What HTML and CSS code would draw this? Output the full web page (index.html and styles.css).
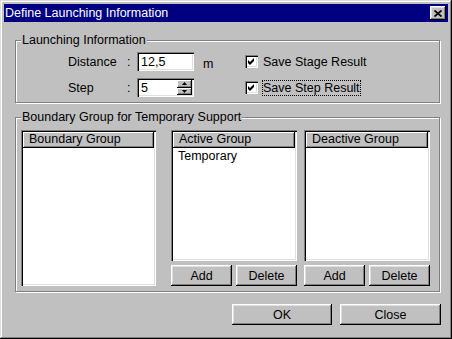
FILE: index.html
```html
<!DOCTYPE html>
<html lang="en">
<head>
    <meta charset="UTF-8">
    <title>Define Launching Information</title>
    <link rel="stylesheet" href="styles.css">
</head>
<body>
    <div class="window">
        <div class="titlebar">
            <span class="title">Define Launching Information</span>
            <span class="close-btn">
                <svg width="8" height="7" viewBox="0 0 8 7"><path d="M0.5 0.5L7.5 6.5M7.5 0.5L0.5 6.5" stroke="#000" stroke-width="1.7" fill="none"/></svg>
            </span>
        </div>

        <div class="dialog-body">
            <div class="group group-launch">
                <span class="group-label">Launching Information</span>
                <div class="field-grid">
                    <span class="field-label">Distance</span>
                    <span class="colon">:</span>
                    <div class="edit"><span class="edit-value">12,5</span></div>
                    <span class="unit">m</span>
                    <div class="check">
                        <span class="check-box"><svg width="9" height="9" viewBox="0 0 9 9"><polygon points="1,3 3,5 7,1 7,4 3,8 1,6" fill="#000"/></svg></span>
                        <span class="check-text">Save Stage Result</span>
                    </div>

                    <span class="field-label">Step</span>
                    <span class="colon">:</span>
                    <div class="edit">
                        <span class="edit-value">5</span>
                        <span class="spin-buttons">
                            <span class="spin-btn"><svg width="5" height="3" viewBox="0 0 5 3"><polygon points="2.5,0 5,3 0,3" fill="#000"/></svg></span>
                            <span class="spin-btn"><svg width="5" height="3" viewBox="0 0 5 3"><polygon points="0,0 5,0 2.5,3" fill="#000"/></svg></span>
                        </span>
                    </div>
                    <span></span>
                    <div class="check">
                        <span class="check-box"><svg width="9" height="9" viewBox="0 0 9 9"><polygon points="1,3 3,5 7,1 7,4 3,8 1,6" fill="#000"/></svg></span>
                        <span class="check-text focused">Save Step Result</span>
                    </div>
                </div>
            </div>

            <div class="group group-boundary">
                <span class="group-label">Boundary Group for Temporary Support</span>
                <div class="lists">
                    <div class="listbox list-boundary">
                        <div class="list-header">Boundary Group</div>
                    </div>
                    <div class="list-column">
                        <div class="listbox">
                            <div class="list-header">Active Group</div>
                            <div class="list-item">Temporary</div>
                        </div>
                        <div class="button-row">
                            <button class="btn">Add</button>
                            <button class="btn">Delete</button>
                        </div>
                    </div>
                    <div class="list-column">
                        <div class="listbox">
                            <div class="list-header">Deactive Group</div>
                        </div>
                        <div class="button-row">
                            <button class="btn">Add</button>
                            <button class="btn">Delete</button>
                        </div>
                    </div>
                </div>
            </div>

            <div class="footer">
                <button class="btn btn-ok">OK</button>
                <button class="btn btn-close">Close</button>
            </div>
        </div>
    </div>
</body>
</html>
```

FILE: styles.css
```css
* {
    box-sizing: border-box;
}
body {
    margin: 0;
    font-family: "Liberation Sans", Arial, sans-serif;
    font-size: 12.5px;
    color: #000;
    background: #c0c0c0;
}
.window {
    width: 452px;
    height: 339px;
    padding: 4px;
    background: #c0c0c0;
    box-shadow: inset -1px -1px #000, inset 1px 1px #dfdfdf, inset -2px -2px #808080, inset 2px 2px #fff;
}
.titlebar {
    height: 18px;
    background: #000080;
    color: #fff;
    display: flex;
    align-items: center;
    justify-content: space-between;
    padding: 0 2px 0 1px;
}
.close-btn {
    width: 16px;
    height: 14px;
    background: #c0c0c0;
    display: flex;
    align-items: center;
    justify-content: center;
    box-shadow: inset -1px -1px #000, inset 1px 1px #fff, inset -2px -2px #808080, inset 2px 2px #dfdfdf;
}
.close-btn svg {
    display: block;
}
.dialog-body {
    padding: 18px 0 0 11px;
}
.group {
    position: relative;
    width: 425px;
    border: 1px solid #808080;
    box-shadow: inset 1px 1px #fff, 1px 1px #fff;
}
.group-label {
    position: absolute;
    top: -8px;
    left: 5px;
    padding: 0 1px;
    line-height: 14px;
    background: #c0c0c0;
}
.group-launch {
    height: 63px;
    padding: 11px 0 0 52px;
}
.field-grid {
    display: grid;
    grid-template-columns: 59px 10px 57px 51px auto;
    grid-template-rows: 19px 19px;
    row-gap: 7px;
    align-items: center;
}
.unit {
    align-self: end;
    padding-left: 9px;
    line-height: 14px;
}
.edit {
    height: 19px;
    background: #fff;
    display: flex;
    align-items: center;
    padding: 2px 2px 2px 4px;
    box-shadow: inset 1px 1px #808080, inset 2px 2px #000, inset -1px -1px #fff, inset -2px -2px #dfdfdf;
}
.edit-value {
    flex: 1;
    line-height: 14px;
}
.spin-buttons {
    width: 15px;
    height: 15px;
    display: flex;
    flex-direction: column;
}
.spin-btn {
    flex: 1;
    background: #c0c0c0;
    display: flex;
    align-items: center;
    justify-content: center;
    box-shadow: inset -1px -1px #000, inset 1px 1px #fff, inset -2px -2px #808080;
}
.spin-btn svg {
    display: block;
}
.check {
    display: flex;
    align-items: center;
    gap: 4px;
}
.check-box {
    width: 13px;
    height: 13px;
    background: #fff;
    display: flex;
    align-items: center;
    justify-content: center;
    box-shadow: inset 1px 1px #808080, inset 2px 2px #000, inset -1px -1px #fff, inset -2px -2px #dfdfdf;
}
.check-box svg {
    display: block;
}
.check-text {
    border: 1px dotted transparent;
    line-height: 14px;
}
.check-text.focused {
    border-color: #000;
}
.group-boundary {
    height: 175px;
    margin-top: 14px;
    padding: 12px 0 0 5px;
}
.lists {
    display: flex;
    height: 156px;
}
.listbox {
    background: #fff;
    padding: 2px;
    box-shadow: inset 1px 1px #808080, inset 2px 2px #000, inset -1px -1px #fff, inset -2px -2px #dfdfdf;
}
.list-boundary {
    width: 135px;
    height: 156px;
    margin-right: 15px;
}
.list-column {
    width: 126px;
    margin-right: 7px;
    display: flex;
    flex-direction: column;
    gap: 4px;
}
.list-column .listbox {
    height: 131px;
}
.list-header {
    height: 16px;
    line-height: 15px;
    padding-left: 6px;
    background: #c0c0c0;
    box-shadow: inset -1px -1px #000, inset 1px 1px #fff, inset -2px -2px #808080;
}
.list-item {
    line-height: 15px;
    padding: 1px 0 0 5px;
}
.button-row {
    display: flex;
    gap: 4px;
}
.btn {
    height: 21px;
    padding: 0;
    border: none;
    background: #c0c0c0;
    font: inherit;
    color: #000;
    box-shadow: inset -1px -1px #000, inset 1px 1px #fff, inset -2px -2px #808080, inset 2px 2px #dfdfdf;
}
.button-row .btn {
    flex: 1;
}
.footer {
    display: flex;
    justify-content: flex-end;
    gap: 8px;
    margin-top: 12px;
    padding-right: 7px;
}
.btn-ok {
    width: 100px;
}
.btn-close {
    width: 101px;
}
```
